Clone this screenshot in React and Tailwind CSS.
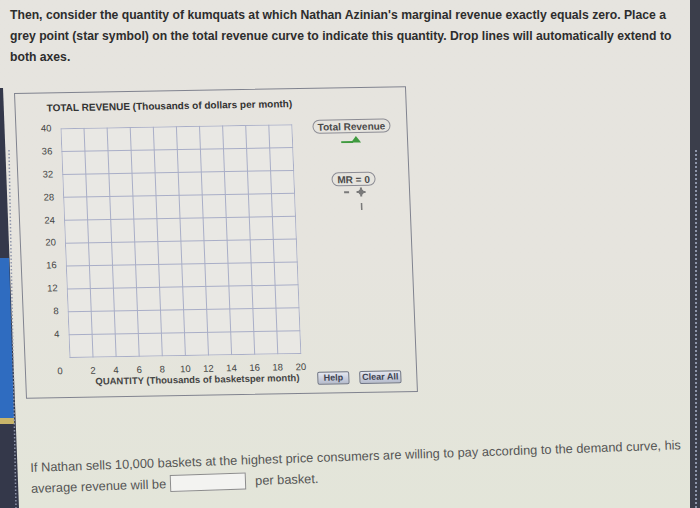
import React from "react";

const Y_TICKS = [40, 36, 32, 28, 24, 20, 16, 12, 8, 4];
const X_TICKS = [2, 4, 6, 8, 10, 12, 14, 16, 18, 20];

const GRID_W = 232;
const GRID_H = 230;

const font = { fontFamily: '"Liberation Sans", Arial, sans-serif' };

function Grid() {
  const lines = [];
  for (let i = 0; i <= 10; i++) {
    const x = 0.5 + (i * (GRID_W - 1)) / 10;
    const y = 0.5 + (i * (GRID_H - 1)) / 10;
    lines.push(<line key={"v" + i} x1={x} y1={0} x2={x} y2={GRID_H} />);
    lines.push(<line key={"h" + i} x1={0} y1={y} x2={GRID_W} y2={y} />);
  }
  return (
    <svg width={GRID_W} height={GRID_H} className="block shrink-0 bg-[#e9e8e4]" stroke="#a9aec7" strokeWidth="1">
      {lines}
    </svg>
  );
}

function Legend() {
  return (
    <div className="ml-[17px] -mt-[4px] flex w-[84px] shrink-0 flex-col items-center">
      <div className="flex h-[14px] items-center whitespace-nowrap rounded-full border border-[#8c8c94] px-[4px] text-[10px] font-bold text-[#4a4a4a]">
        Total Revenue
      </div>
      <svg width="22" height="8" className="mt-[2px] block">
        <line x1="0" y1="7" x2="12" y2="7" stroke="#3f9a3f" strokeWidth="2" />
        <polygon points="10,7.5 15,1 20,7.5" fill="#3f9a3f" />
      </svg>
      <div className="mt-[29px] flex h-[14px] items-center whitespace-nowrap rounded-full border border-[#8c8c94] px-[5px] text-[10px] font-bold text-[#4a4a4a]">
        MR = 0
      </div>
      <svg width="30" height="24" className="mt-[1px] block">
        <line x1="5" y1="5" x2="10" y2="5" stroke="#7a7a7a" strokeWidth="2" />
        <circle cx="22" cy="5" r="2.6" fill="#7a7a7a" />
        <line x1="22" y1="0.5" x2="22" y2="9.5" stroke="#7a7a7a" strokeWidth="2" />
        <line x1="17.5" y1="5" x2="26.5" y2="5" stroke="#7a7a7a" strokeWidth="2" />
        <line x1="22" y1="16" x2="22" y2="23" stroke="#7a7a7a" strokeWidth="1.5" />
      </svg>
    </div>
  );
}

function Button({ children, width }) {
  return (
    <button
      className={`flex h-[13px] items-center justify-center rounded-[2px] border border-[#6d7384] bg-gradient-to-b from-[#e4e7f0] to-[#b6bccd] text-[9px] font-bold leading-none text-[#3d4250] ${width}`}
    >
      {children}
    </button>
  );
}

function GraphBox() {
  return (
    <div className="ml-[14px] mt-[25px] h-[306px] w-[392px] origin-top-left rotate-[-1deg] skew-x-[1.25deg] border border-[#80838f]">
      <div className="h-[35px] pl-[31px] pt-[7px] text-[10px] font-bold text-[#333]">
        TOTAL REVENUE (Thousands of dollars per month)
      </div>
      <div className="flex">
        <div className="-mt-[6px] flex w-[44px] shrink-0 flex-col items-end pr-[9px]">
          {Y_TICKS.map((v) => (
            <div key={v} className="h-[22.9px] text-[9.5px] leading-[12px] text-[#444]">
              {v}
            </div>
          ))}
        </div>
        <Grid />
        <Legend />
      </div>
      <div className="mt-[7px] flex text-[9.5px] leading-[12px] text-[#444]">
        <div className="w-[28px] shrink-0" />
        <div className="w-[12px] shrink-0 text-center">0</div>
        <div className="w-[15.5px] shrink-0" />
        {X_TICKS.map((v) => (
          <div key={v} className="w-[23.1px] shrink-0 text-center">
            {v}
          </div>
        ))}
      </div>
      <div className="-mt-[2px] flex items-center">
        <div className="ml-[69px] w-[222px] shrink-0 whitespace-nowrap text-[9.5px] font-bold text-[#444]">
          QUANTITY (Thousands of basketsper month)
        </div>
        <Button width="w-[32px]">Help</Button>
        <div className="w-[10px]" />
        <Button width="w-[42px]">Clear All</Button>
      </div>
    </div>
  );
}

function Bezel() {
  return (
    <svg width="22" height="508" className="absolute left-0 top-0">
      <polygon points="0,88 3,88 19,508 0,508" fill="#34384a" />
      <polygon points="0,258 9,258 14,418 0,418" fill="#2f6cc0" />
      <polygon points="0,418 14,418 14.3,424 0,424" fill="#c9b56a" />
      <line x1="9" y1="150" x2="16" y2="508" stroke="#8f96ab" strokeWidth="1.5" strokeDasharray="1.5 2" />
    </svg>
  );
}

export default function App() {
  return (
    <div
      className="relative flex h-[508px] w-[700px] overflow-hidden bg-gradient-to-b from-[#e6e4df] via-[#e6e4de] to-[#e3e5d9]"
      style={font}
    >
      <div className="min-w-0 flex-1">
        <p className="whitespace-nowrap pl-[10px] pt-[5px] text-[12.2px] font-bold leading-[21px] text-[#2d2d2d]">
          Then, consider the quantity of kumquats at which Nathan Azinian's marginal revenue exactly equals zero. Place a
          <br />
          grey point (star symbol) on the total revenue curve to indicate this quantity. Drop lines will automatically extend to
          <br />
          both axes.
        </p>

        <GraphBox />

        <div className="mt-[59px] origin-top-left rotate-[-2deg] pl-[30px] text-[12.8px] leading-[21px] text-[#555]">
          <div className="whitespace-nowrap">
            If Nathan sells 10,000 baskets at the highest price consumers are willing to pay according to the demand curve, his
          </div>
          <div className="flex items-center whitespace-nowrap">
            <span>average revenue will be</span>
            <input
              type="text"
              className="ml-[4px] h-[17px] w-[76px] border border-[#8c8c8c] bg-[#f3f3f1] outline-none"
            />
            <span className="ml-[9px]">per basket.</span>
          </div>
        </div>
      </div>

      <div className="w-[10px] shrink-0 bg-[#3b3e4b]">
        <div className="ml-[5px] mt-[150px] h-[358px] border-l-2 border-dotted border-[#8f96ab]" />
      </div>

      <Bezel />
    </div>
  );
}
